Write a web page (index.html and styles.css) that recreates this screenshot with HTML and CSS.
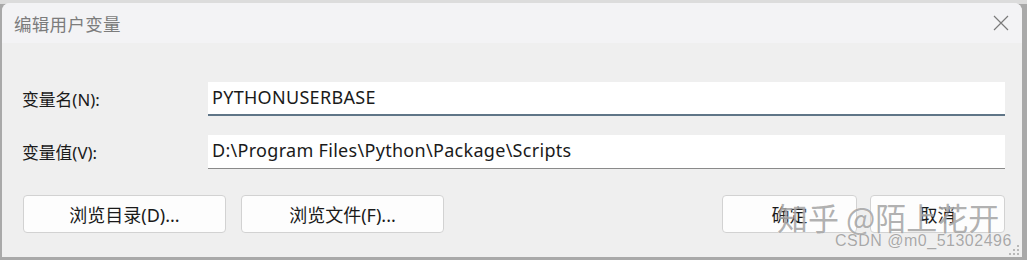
FILE: index.html
```html
<!DOCTYPE html>
<html lang="zh-CN">
<head>
<meta charset="utf-8">
<title>编辑用户变量</title>
<link rel="stylesheet" href="styles.css">
</head>
<body>
<div class="backdrop-top"></div>
<div class="dialog">
  <div class="titlebar">
    <span class="title">编辑用户变量</span>
    <svg class="close" width="16" height="16" viewBox="0 0 16 16"><path d="M1 1 L15 15 M15 1 L1 15" stroke="#7a7a7a" stroke-width="1.2" fill="none"/></svg>
  </div>
  <div class="content">
    <div class="row">
      <label class="label">变量名(N):</label>
      <div class="input active">PYTHONUSERBASE</div>
    </div>
    <div class="row">
      <label class="label">变量值(V):</label>
      <div class="input">D:\Program Files\Python\Package\Scripts</div>
    </div>
    <div class="buttons">
      <div class="btn wide">浏览目录(D)...</div>
      <div class="btn wide">浏览文件(F)...</div>
      <div class="spacer"></div>
      <div class="btn narrow">确定</div>
      <div class="btn narrow">取消</div>
    </div>
  </div>
  <div class="watermark">知乎 @陌上花开</div>
  <div class="csdn">CSDN @m0_51302496</div>
  <svg class="grip" width="10" height="10" viewBox="0 0 10 10"><g fill="#b8b8b8"><rect x="8" y="0" width="2" height="2"/><rect x="4" y="4" width="2" height="2"/><rect x="8" y="4" width="2" height="2"/><rect x="0" y="8" width="2" height="2"/><rect x="4" y="8" width="2" height="2"/><rect x="8" y="8" width="2" height="2"/></g></svg>
</div>
</body>
</html>
```
FILE: styles.css
```css
html, body {
  margin: 0;
  padding: 0;
}
body {
  width: 1027px;
  height: 260px;
  background: #a9a9a9;
  overflow: hidden;
  position: relative;
  font-family: "Noto Sans", "Noto Sans CJK SC", sans-serif;
}
.backdrop-top {
  position: absolute;
  left: 0;
  top: 0;
  width: 1027px;
  height: 4px;
  background: #dcdcdc;
}
.dialog {
  position: absolute;
  left: 2px;
  top: 3px;
  width: 1020px;
  height: 254px;
  background: #efefef;
  border-radius: 8px 8px 0 0;
  overflow: hidden;
  display: flex;
  flex-direction: column;
}
.titlebar {
  height: 40px;
  background: #f3f3f5;
  display: flex;
  align-items: center;
  justify-content: space-between;
  padding: 0 13px 0 12px;
  flex-shrink: 0;
}
.title {
  font-size: 17.5px;
  color: #7c7c7c;
  font-family: "Noto Sans CJK SC", sans-serif;
  letter-spacing: 0.3px;
}
.close {
  display: block;
}
.content {
  padding: 39px 17px 0 20px;
  display: flex;
  flex-direction: column;
}
.row {
  display: flex;
  align-items: center;
  margin-bottom: 19px;
}
.label {
  width: 186px;
  font-size: 16.8px;
  color: #1a1a1a;
  font-family: "Noto Sans", "Noto Sans CJK SC", sans-serif;
}
.input {
  flex: 1;
  height: 34px;
  box-sizing: border-box;
  background: #ffffff;
  border-bottom: 1px solid #8a8a8a;
  padding-left: 4px;
  font-size: 18px;
  letter-spacing: 0.3px;
  line-height: 30px;
  color: #1a1a1a;
  white-space: nowrap;
}
.input.active {
  border-bottom: 2px solid #5f7587;
  line-height: 31px;
}
.buttons {
  display: flex;
  margin-top: 7px;
  padding-left: 1px;
}
.btn {
  height: 38px;
  box-sizing: border-box;
  background: #fdfdfd;
  border: 1px solid #d2d2d2;
  border-radius: 4px;
  display: flex;
  align-items: center;
  justify-content: center;
  font-size: 18px;
  color: #1a1a1a;
}
.btn.wide {
  width: 203px;
  margin-right: 15px;
}
.btn.narrow {
  width: 135px;
  margin-left: 13px;
}
.spacer {
  flex: 1;
}
.watermark {
  position: absolute;
  left: 775px;
  top: 191px;
  font-size: 31px;
  font-family: "Noto Sans CJK SC", sans-serif;
  color: rgba(110, 110, 110, 0.55);
  text-shadow: 0 0 1px rgba(255,255,255,0.8);
  white-space: nowrap;
}
.csdn {
  position: absolute;
  left: 833px;
  top: 229px;
  font-size: 16px;
  letter-spacing: 0.5px;
  font-family: "Liberation Sans", sans-serif;
  color: #a8a8a8;
  text-shadow: 0 0 1px #ffffff;
  white-space: nowrap;
}
.grip {
  position: absolute;
  right: 3px;
  bottom: 2px;
}
```
